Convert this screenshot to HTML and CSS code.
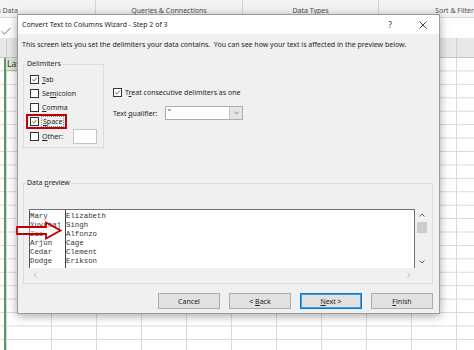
FILE: index.html
```html
<!DOCTYPE html>
<html>
<head>
    <title>Convert Text to Columns Wizard - Step 2 of 3</title>
    <meta charset="UTF-8">
    <meta name="viewport" content="width=device-width, initial-scale=1.0">
    <link rel="stylesheet" href="styles.css">
</head>
<body>
    <div class="sheet">
        <div class="ribbon">
            <div class="rgroup g1"><span>Get &amp; Transform Data</span></div>
            <div class="rgroup g2"><span>Queries &amp; Connections</span></div>
            <div class="rgroup g3"><span>Data Types</span></div>
            <div class="rgroup g4"><span>Sort &amp; Filter</span></div>
        </div>
        <div class="formula-bar">
            <svg class="enter" viewBox="0 0 10 8"><path d="M0.5 4.2 L3.4 7 L9.5 0.8"/></svg>
        </div>
        <div class="col-heads"></div>
        <div class="grid">
            <div class="sel-col">
                <div class="sel-cell"><span>Last Name</span></div>
            </div>
        </div>
    </div>

    <div class="dialog">
        <div class="titlebar">
            <span class="title">Convert Text to Columns Wizard - Step 2 of 3</span>
            <span class="tb-btn help">?</span>
            <span class="tb-btn close"><svg viewBox="0 0 8 8"><path d="M0.5 0.5 L7.5 7.5 M7.5 0.5 L0.5 7.5"/></svg></span>
        </div>

        <div class="content">
            <p class="intro">This screen lets you set the delimiters your data contains.&nbsp; You can see how your text is affected in the preview below.</p>

            <div class="options">
                <fieldset class="group delims">
                    <legend>Delimiters</legend>
                    <div class="rows">
                        <div class="check">
                            <span class="box"><svg viewBox="0 0 9 9"><path d="M1.6 4.5 L3.6 6.5 L7.4 2.1"/></svg></span>
                            <span><u>T</u>ab</span>
                        </div>
                        <div class="check">
                            <span class="box"></span>
                            <span>Se<u>m</u>icolon</span>
                        </div>
                        <div class="check">
                            <span class="box"></span>
                            <span><u>C</u>omma</span>
                        </div>
                        <div class="check">
                            <span class="marked">
                                <span class="box"><svg viewBox="0 0 9 9"><path d="M1.6 4.5 L3.6 6.5 L7.4 2.1"/></svg></span>
                                <span class="focus"><u>S</u>pace</span>
                            </span>
                        </div>
                        <div class="check other">
                            <span class="box"></span>
                            <span class="other-label"><u>O</u>ther:</span>
                            <span class="textbox"></span>
                        </div>
                    </div>
                </fieldset>

                <div class="side">
                    <div class="check">
                        <span class="box"><svg viewBox="0 0 9 9"><path d="M1.6 4.5 L3.6 6.5 L7.4 2.1"/></svg></span>
                        <span>T<u>r</u>eat consecutive delimiters as one</span>
                    </div>
                    <div class="qualifier">
                        <span class="q-label">Text <u>q</u>ualifier:</span>
                        <div class="select">
                            <span class="value">"</span>
                            <span class="drop"><svg viewBox="0 0 6 4"><path d="M0.5 0.5 L3 3 L5.5 0.5"/></svg></span>
                        </div>
                    </div>
                </div>
            </div>

            <fieldset class="group preview">
                <legend>Data <u>p</u>review</legend>
                <div class="preview-box">
                    <div class="data">
                        <div class="col c1">Mary<br>Yuvraaj<br>Zac<br>Arjun<br>Cedar<br>Dodge</div>
                        <div class="col c2">Elizabeth<br>Singh<br>Alfonzo<br>Cage<br>Clement<br>Erikson</div>
                    </div>
                    <div class="vscroll">
                        <span class="sb-arrow"><svg viewBox="0 0 6 4"><path d="M0.5 3.5 L3 1 L5.5 3.5"/></svg></span>
                        <span class="thumb"></span>
                        <span class="sb-arrow down"><svg viewBox="0 0 6 4"><path d="M0.5 0.5 L3 3 L5.5 0.5"/></svg></span>
                    </div>
                    <div class="hscroll">
                        <svg viewBox="0 0 4 6"><path d="M3.5 0.5 L1 3 L3.5 5.5"/></svg>
                        <svg viewBox="0 0 4 6"><path d="M0.5 0.5 L3 3 L0.5 5.5"/></svg>
                    </div>
                    <div class="corner"></div>
                </div>
            </fieldset>

            <div class="buttons">
                <button>Cancel</button>
                <button>&lt; <u>B</u>ack</button>
                <button class="default"><u>N</u>ext &gt;</button>
                <button><u>F</u>inish</button>
            </div>
        </div>

        <svg class="note-arrow" viewBox="0 0 46 19"><path d="M1 6 H30 V1.5 L44.5 9.5 L30 17.5 V13 H1 Z"/></svg>
    </div>
</body>
</html>
```

FILE: styles.css
```css
body {
    margin: 0;
    width: 474px;
    height: 350px;
    overflow: hidden;
    background-color: #fff;
    font-family: "Noto Sans", "Open Sans", sans-serif;
}

/* spreadsheet behind the dialog */
.sheet {
    display: flex;
    flex-direction: column;
    height: 350px;
}

.ribbon {
    display: flex;
    height: 17px;
    background-color: #f3f3f3;
    border-bottom: 1px solid #dadada;
    font-size: 7px;
    color: #505050;
    white-space: nowrap;
}

.rgroup {
    display: flex;
    align-items: center;
    justify-content: center;
    padding-top: 3px;
    box-sizing: border-box;
    border-right: 1px solid #d2d2d2;
    overflow: hidden;
    flex-shrink: 0;
}

.g1 {
    width: 96px;
    justify-content: flex-end;
    padding-right: 77px;
}

.g2 { width: 147px; }
.g3 { width: 136px; }
.g4 { width: 151px; border-right: none; }

.formula-bar {
    height: 20px;
    background-color: #fff;
    display: flex;
    align-items: center;
    padding-left: 1px;
}

.enter {
    width: 10px;
    height: 8px;
    margin-top: 6px;
    fill: none;
    stroke: #a6a6a6;
    stroke-width: 1.1;
}

.col-heads {
    height: 19px;
    background-color: #e8e8e8;
    border-bottom: 1px solid #c4c4c4;
    background-image: linear-gradient(to right, #cfcfcf 1px, transparent 1px);
    background-size: 45px 100%;
    background-position: 6px 0;
}

.grid {
    flex: 1;
    display: flex;
    padding-left: 4px;
    background-image:
        linear-gradient(to right, #d9d9d9 1px, transparent 1px),
        linear-gradient(to bottom, transparent 12.43px, #d9d9d9 12.43px);
    background-size: 45px 100%, 100% 13.43px;
    background-position: 6px 0, 0 0;
}

.sel-col {
    width: 47px;
    border-left: 2px solid #5a9468;
    box-sizing: border-box;
}

.sel-cell {
    height: 12px;
    background-color: #dbe8d4;
    border-bottom: 1px solid #9fc4a8;
    font-size: 8.6px;
    line-height: 12px;
    color: #333;
    padding-left: 1px;
}

.sel-cell span {
    display: block;
    width: 11px;
    white-space: nowrap;
    overflow: hidden;
}

/* dialog */
.dialog {
    position: absolute;
    left: 17px;
    top: 14px;
    width: 423px;
    height: 300px;
    box-sizing: border-box;
    background-color: #f0f0f0;
    border: 1px solid #9c9c9c;
    box-shadow: 0 2px 9px rgba(0, 0, 0, 0.35);
    font-size: 7px;
    color: #1e1e1e;
}

.titlebar {
    display: flex;
    align-items: center;
    height: 19px;
    background-color: #fff;
    padding-left: 4px;
    padding-right: 5px;
}

.title {
    flex: 1;
    font-size: 7px;
    color: #222;
    white-space: nowrap;
}

.tb-btn {
    width: 22px;
    display: flex;
    justify-content: center;
    align-items: center;
    color: #333;
}

.help {
    font-size: 8.2px;
    margin-right: 11px;
}

.close svg {
    width: 8px;
    height: 8px;
    fill: none;
    stroke: #333;
    stroke-width: 0.9;
}

.content {
    padding: 0 6px 0 4px;
}

.intro {
    margin: 6px 0 0 0;
    line-height: 10px;
    white-space: nowrap;
}

u {
    text-decoration-thickness: 0.6px;
    text-underline-offset: 1px;
}

.options {
    display: flex;
    align-items: flex-start;
    margin-top: 9px;
}

.group {
    margin: 0 0 0 1px;
    padding: 0;
    border: 1px solid #dcdcdc;
    box-sizing: border-box;
    min-width: 0;
}

.group legend {
    margin-left: 2px;
    padding: 0 1px;
    line-height: 10px;
}

.delims {
    width: 81px;
}

.rows {
    padding: 3px 0 3px 6px;
}

.check {
    display: flex;
    align-items: center;
    height: 14px;
    white-space: nowrap;
}

.box {
    width: 9px;
    height: 9px;
    box-sizing: border-box;
    border: 1px solid #333;
    background-color: #fff;
    margin-right: 3px;
    flex-shrink: 0;
    display: flex;
}

.box svg {
    width: 7px;
    height: 7px;
    fill: none;
    stroke: #222;
    stroke-width: 0.9;
}

.marked {
    display: inline-flex;
    align-items: center;
    height: 11px;
    padding: 0 2px;
    margin-left: -2px;
    outline: 2px solid #c00000;
}

.focus {
    outline: 1px dotted #8a8a8a;
    padding: 0 1px;
}

.other {
    height: 16px;
}

.other-label {
    width: 31px;
}

.textbox {
    width: 24px;
    height: 15px;
    box-sizing: border-box;
    background-color: #fff;
    border: 1px solid #c4c4c4;
}

.side {
    margin-left: 9px;
    margin-top: 26px;
}

.qualifier {
    display: flex;
    align-items: center;
    margin-top: 7px;
}

.q-label {
    width: 52px;
    white-space: nowrap;
}

.select {
    display: flex;
    width: 78px;
    height: 14px;
    box-sizing: border-box;
    background-color: #fff;
    border: 1px solid #adadad;
}

.value {
    flex: 1;
    padding-left: 2px;
    line-height: 9px;
}

.drop {
    width: 12px;
    background-color: #e5e5e5;
    border-left: 1px solid #c4c4c4;
    display: flex;
    align-items: center;
    justify-content: center;
}

.drop svg {
    width: 5px;
    height: 4px;
    fill: none;
    stroke: #555;
    stroke-width: 0.9;
}

.preview {
    width: 410px;
    margin-top: 30px;
    padding-bottom: 2px;
}

.preview-box {
    display: grid;
    grid-template-columns: 386px 13px;
    grid-template-rows: 59px 13px;
    margin: 21px 0 0 5px;
}

.data {
    display: flex;
    background-color: #fff;
    border-top: 1px solid #707070;
    border-right: 1px solid #707070;
    font-family: "Liberation Mono", monospace;
    font-size: 7.4px;
    line-height: 9px;
    color: #333;
    overflow: hidden;
}

.col {
    padding-top: 2px;
    white-space: nowrap;
}

.c1 {
    width: 37px;
    box-sizing: border-box;
    border-left: 1px solid #555;
    border-right: 1px solid #444;
}

.vscroll {
    display: flex;
    flex-direction: column;
    align-items: center;
    background-color: #f0f0f0;
}

.sb-arrow {
    height: 12px;
    display: flex;
    align-items: center;
}

.sb-arrow.down {
    margin-top: auto;
}

.sb-arrow svg {
    width: 6px;
    height: 4px;
    fill: none;
    stroke: #606060;
    stroke-width: 1;
}

.thumb {
    width: 10px;
    height: 11px;
    margin-top: 1px;
    background-color: #cdcdcd;
}

.hscroll {
    display: flex;
    align-items: center;
    justify-content: space-between;
    padding: 0 4px;
    background-color: #f0f0f0;
}

.hscroll svg {
    width: 4px;
    height: 6px;
    fill: none;
    stroke: #bdbdbd;
    stroke-width: 1;
}

.corner {
    background-color: #f0f0f0;
}

.buttons {
    display: flex;
    justify-content: flex-end;
    gap: 9px;
    margin-top: 9px;
}

button {
    width: 62px;
    height: 16px;
    padding: 0;
    background-color: #e1e1e1;
    border: 1px solid #adadad;
    font-family: inherit;
    font-size: 7px;
    color: #1e1e1e;
}

button.default {
    border-color: #0078d7;
    box-shadow: inset 0 0 0 1px #4a9ee0;
}

/* red arrow drawn over the preview */
.note-arrow {
    position: absolute;
    left: -2px;
    top: 206px;
    width: 46px;
    height: 19px;
    fill: rgba(255, 255, 255, 0.45);
    stroke: #c00000;
    stroke-width: 1.8;
    stroke-linejoin: miter;
}
```
